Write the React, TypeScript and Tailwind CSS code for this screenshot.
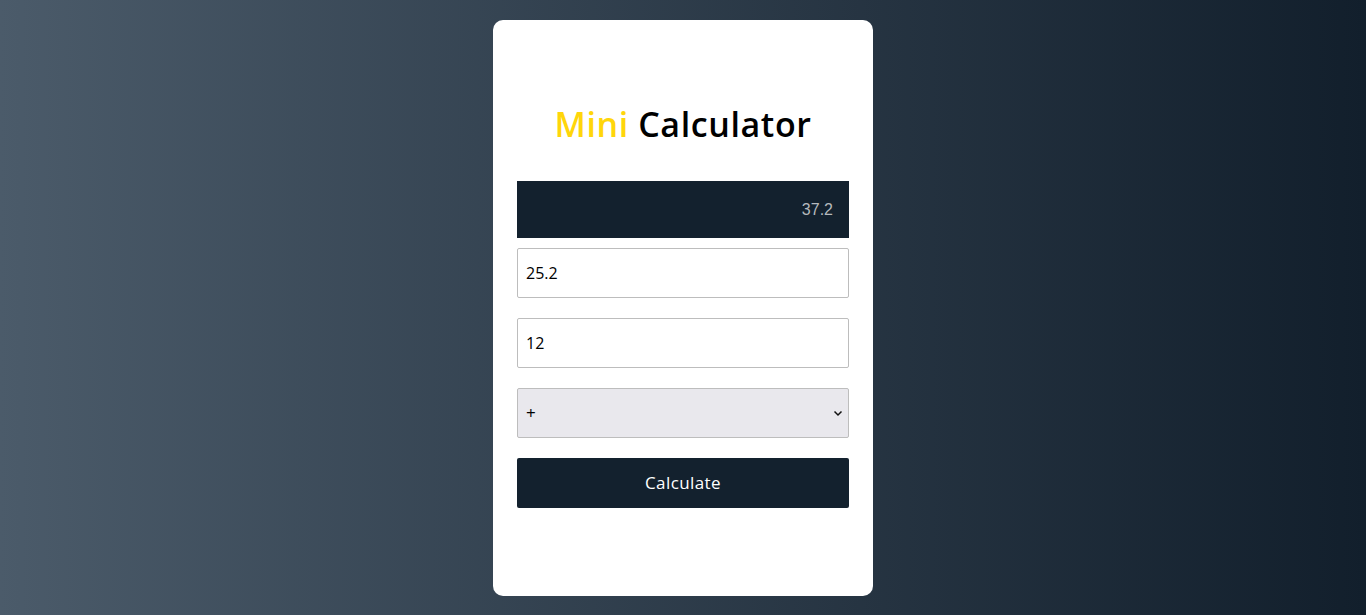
import React from "react";

export default function App() {
  return (
    <div
      className="w-full h-[615px] flex justify-center bg-gradient-to-r from-[#4b5b6a] to-[#121f2c]"
      style={{ fontFamily: '"Open Sans", "DejaVu Sans", sans-serif' }}
    >
      <div className="mt-[20px] w-[380px] h-[576px] bg-white rounded-[10px] px-[24px] pt-[80px] flex flex-col">
        <h1 className="text-[34px] leading-[48px] font-semibold text-center text-black tracking-[0.6px]">
          <span className="text-[#ffd60a]">Mini</span> Calculator
        </h1>
        <div
          className="mt-[33px] h-[57px] bg-[#13212e] flex items-center justify-end pr-[16px] text-[16px] text-[#b5b9bd]"
          style={{ fontFamily: '"Liberation Sans", Arial, sans-serif' }}
        >
          37.2
        </div>
        <input
          readOnly
          value="25.2"
          className="mt-[10px] h-[50px] border border-[#bdbdbd] rounded-[2px] px-[8px] text-[16px] text-black outline-none"
        />
        <input
          readOnly
          value="12"
          className="mt-[20px] h-[50px] border border-[#bdbdbd] rounded-[2px] px-[8px] text-[16px] text-black outline-none"
        />
        <div className="relative mt-[20px] h-[50px]">
          <select
            className="w-full h-full appearance-none border border-[#bdbdbd] rounded-[2px] bg-[#e9e8ed] px-[8px] text-[17px] text-black outline-none"
            defaultValue="+"
          >
            <option value="+">+</option>
            <option value="-">-</option>
            <option value="*">*</option>
            <option value="/">/</option>
          </select>
          <svg
            className="absolute right-[6px] top-1/2 -translate-y-1/2 pointer-events-none"
            width="10"
            height="10"
            viewBox="0 0 10 10"
          >
            <path d="M1.5 3.5 L5 7 L8.5 3.5" fill="none" stroke="#111" strokeWidth="1.5" />
          </svg>
        </div>
        <button className="mt-[20px] h-[50px] bg-[#13212e] text-white text-[17px] tracking-[0.4px] rounded-[2px]">
          Calculate
        </button>
      </div>
    </div>
  );
}
